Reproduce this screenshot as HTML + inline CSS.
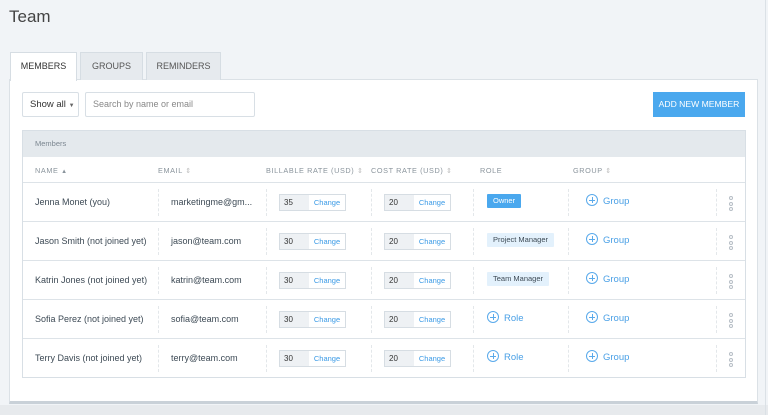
<!DOCTYPE html>
<html><head><style>
*{box-sizing:border-box;margin:0;padding:0}
body{width:768px;height:415px;overflow:hidden;background:#f1f4f7;font-family:"Liberation Sans",sans-serif;color:#3d4a55;position:relative}
.abs{position:absolute}
.title{left:9px;top:7px;font-size:17px;color:#444}
.tab{top:52px;height:28px;font-size:9px;text-align:center;line-height:27px;border:1px solid #d6dde3;border-bottom:none;background:#e6eaee;color:#555}
.panel{left:9px;top:79px;width:749px;height:325px;background:#fff;border:1px solid #dbe1e6;border-bottom:3px solid #c9d1d8}
.box{border:1px solid #d8dfe5;background:#fff;border-radius:2px;font-size:10px}
.btn{left:653px;top:92px;width:92px;height:25px;background:#4aa8ee;color:#fff;font-size:8.6px;text-align:center;line-height:25px}
.table{left:22px;top:130px;width:724px;height:248px;border:1px solid #d8dfe5;background:#fff}
.band{left:0;top:0;width:722px;height:26px;background:#e4e9ed;font-size:7.5px;color:#7c8791;line-height:26px;padding-left:12px}
.hd{top:35px;font-size:7.3px;letter-spacing:0.6px;color:#8a949c}
.row{left:0;width:722px;height:39px;border-top:1px solid #dde3e8}
.cell{top:0;height:39px;line-height:39px;font-size:9px}
.sep{top:6px;height:27px;border-left:1px dashed #e3e7ea}
.inp{top:11px;width:67px;height:17px;border:1px solid #d6dde3;font-size:8px;line-height:15px;display:flex}
.inp span:first-child{width:29px;background:#eef1f4;padding-left:4px;color:#333}
.inp span:last-child{flex:1;color:#3a9ae6;text-align:center;font-size:7.5px}
.badge{top:11px;height:14px;line-height:14px;font-size:7.5px;padding:0 6px;border-radius:1px}
.link{top:0;line-height:38px;font-size:9.5px;color:#4aa0e6}
.plus{display:inline-block;width:12px;height:12px;border:1px solid #5aaaeb;border-radius:50%;vertical-align:-2px;margin-right:5px;position:relative}
.plus:before{content:"";position:absolute;left:2px;top:5px;width:6px;height:1px;background:#5aaaeb}
.plus:after{content:"";position:absolute;left:5px;top:2px;width:1px;height:6px;background:#5aaaeb}
.dots{top:13px;width:4px}
.dots i{display:block;width:4px;height:4px;border:1px solid #b6bec5;border-radius:50%;margin-bottom:1.5px}
</style></head><body>
<div class="abs title">Team</div>
<div class="abs" style="left:0;top:405px;width:768px;height:10px;background:#e7eaed"></div>
<div class="abs" style="left:765px;top:0;width:1px;height:415px;background:#dbe1e6"></div>
<div class="abs panel"></div>
<div class="abs tab" style="left:10px;width:67px;background:#fff;height:29px;color:#333">MEMBERS</div>
<div class="abs tab" style="left:80px;width:63px">GROUPS</div>
<div class="abs tab" style="left:146px;width:75px">REMINDERS</div>
<div class="abs box" style="left:22px;top:92px;width:57px;height:25px;line-height:23px;padding-left:7px;color:#333;font-size:9.5px">Show all <span style="font-size:6px;color:#666">&#9660;</span></div>
<div class="abs box" style="left:85px;top:92px;width:170px;height:25px;line-height:23px;padding-left:7px;color:#888;font-size:9px">Search by name or email</div>
<div class="abs btn">ADD NEW MEMBER</div>
<div class="abs table">
<div class="abs band">Members</div>
<div class="abs hd" style="left:12px">NAME <span style="font-size:6px">&#9650;</span></div>
<div class="abs hd" style="left:135px">EMAIL <span style="font-size:7px;color:#bbb">&#8661;</span></div>
<div class="abs hd" style="left:243px">BILLABLE RATE (USD) <span style="font-size:7px;color:#bbb">&#8661;</span></div>
<div class="abs hd" style="left:348px">COST RATE (USD) <span style="font-size:7px;color:#bbb">&#8661;</span></div>
<div class="abs hd" style="left:457px">ROLE</div>
<div class="abs hd" style="left:550px">GROUP <span style="font-size:7px;color:#bbb">&#8661;</span></div>

<div class="abs row" style="top:51px">
<div class="abs cell" style="left:12px">Jenna Monet (you)</div><div class="abs sep" style="left:135px"></div>
<div class="abs cell" style="left:148px">marketingme@gm...</div><div class="abs sep" style="left:243px"></div>
<div class="abs inp" style="left:256px"><span>35</span><span>Change</span></div><div class="abs sep" style="left:348px"></div>
<div class="abs inp" style="left:361px"><span>20</span><span>Change</span></div><div class="abs sep" style="left:450px"></div>
<div class="abs badge" style="left:464px;background:#4aa8ee;color:#fff">Owner</div><div class="abs sep" style="left:545px"></div>
<div class="abs link" style="left:563px"><span class="plus"></span>Group</div><div class="abs sep" style="left:693px"></div>
<div class="abs dots" style="left:706px"><i></i><i></i><i></i></div></div>

<div class="abs row" style="top:90px">
<div class="abs cell" style="left:12px">Jason Smith (not joined yet)</div><div class="abs sep" style="left:135px"></div>
<div class="abs cell" style="left:148px">jason@team.com</div><div class="abs sep" style="left:243px"></div>
<div class="abs inp" style="left:256px"><span>30</span><span>Change</span></div><div class="abs sep" style="left:348px"></div>
<div class="abs inp" style="left:361px"><span>20</span><span>Change</span></div><div class="abs sep" style="left:450px"></div>
<div class="abs badge" style="left:464px;background:#e3f1fc;color:#3d4a55">Project Manager</div><div class="abs sep" style="left:545px"></div>
<div class="abs link" style="left:563px"><span class="plus"></span>Group</div><div class="abs sep" style="left:693px"></div>
<div class="abs dots" style="left:706px"><i></i><i></i><i></i></div></div>

<div class="abs row" style="top:129px">
<div class="abs cell" style="left:12px">Katrin Jones (not joined yet)</div><div class="abs sep" style="left:135px"></div>
<div class="abs cell" style="left:148px">katrin@team.com</div><div class="abs sep" style="left:243px"></div>
<div class="abs inp" style="left:256px"><span>30</span><span>Change</span></div><div class="abs sep" style="left:348px"></div>
<div class="abs inp" style="left:361px"><span>20</span><span>Change</span></div><div class="abs sep" style="left:450px"></div>
<div class="abs badge" style="left:464px;background:#e3f1fc;color:#3d4a55">Team Manager</div><div class="abs sep" style="left:545px"></div>
<div class="abs link" style="left:563px"><span class="plus"></span>Group</div><div class="abs sep" style="left:693px"></div>
<div class="abs dots" style="left:706px"><i></i><i></i><i></i></div></div>

<div class="abs row" style="top:168px">
<div class="abs cell" style="left:12px">Sofia Perez (not joined yet)</div><div class="abs sep" style="left:135px"></div>
<div class="abs cell" style="left:148px">sofia@team.com</div><div class="abs sep" style="left:243px"></div>
<div class="abs inp" style="left:256px"><span>30</span><span>Change</span></div><div class="abs sep" style="left:348px"></div>
<div class="abs inp" style="left:361px"><span>20</span><span>Change</span></div><div class="abs sep" style="left:450px"></div>
<div class="abs link" style="left:464px"><span class="plus"></span>Role</div><div class="abs sep" style="left:545px"></div>
<div class="abs link" style="left:563px"><span class="plus"></span>Group</div><div class="abs sep" style="left:693px"></div>
<div class="abs dots" style="left:706px"><i></i><i></i><i></i></div></div>

<div class="abs row" style="top:207px">
<div class="abs cell" style="left:12px">Terry Davis (not joined yet)</div><div class="abs sep" style="left:135px"></div>
<div class="abs cell" style="left:148px">terry@team.com</div><div class="abs sep" style="left:243px"></div>
<div class="abs inp" style="left:256px"><span>30</span><span>Change</span></div><div class="abs sep" style="left:348px"></div>
<div class="abs inp" style="left:361px"><span>20</span><span>Change</span></div><div class="abs sep" style="left:450px"></div>
<div class="abs link" style="left:464px"><span class="plus"></span>Role</div><div class="abs sep" style="left:545px"></div>
<div class="abs link" style="left:563px"><span class="plus"></span>Group</div><div class="abs sep" style="left:693px"></div>
<div class="abs dots" style="left:706px"><i></i><i></i><i></i></div></div>
</div>
</body></html>
